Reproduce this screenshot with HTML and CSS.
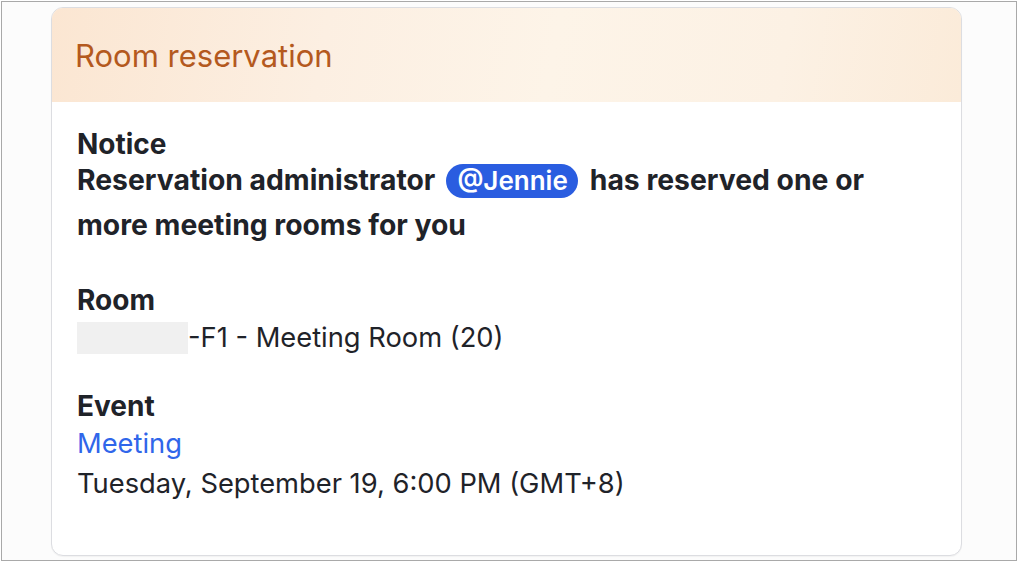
FILE: index.html
```html
<!DOCTYPE html>
<html>
<head>
<meta charset="utf-8">
<link rel="stylesheet" href="styles.css">
</head>
<body>
<div class="frame">
  <div class="card">
    <div class="card-header">
      <h1 class="title">Room reservation</h1>
    </div>
    <div class="card-body">
      <section class="block notice">
        <div class="label">Notice</div>
        <p class="notice-text"><span>Reservation administrator</span><span class="mention">@Jennie</span><span>has reserved one or</span><br><span>more meeting rooms for you</span></p>
      </section>
      <section class="block room">
        <div class="label">Room</div>
        <div class="value"><span class="redacted"></span>-F1 - Meeting Room (20)</div>
      </section>
      <section class="block event">
        <div class="label">Event</div>
        <div class="value link">Meeting</div>
        <div class="value date">Tuesday, September 19, 6:00 PM (GMT+8)</div>
      </section>
    </div>
  </div>
</div>
</body>
</html>
```

FILE: styles.css
```css
* { box-sizing: border-box; }
html, body { margin: 0; padding: 0; background: #ffffff; }
body {
  font-family: Inter, "Noto Sans", "Liberation Sans", sans-serif;
  color: #1f2329;
}
.frame {
  margin: 1px 0 0 1px;
  width: 1016px;
  height: 560px;
  border: 1px solid #a9a9a9;
  background: #fcfcfc;
  padding: 5px 0 0 49px;
}
.card {
  width: 911px;
  height: 549px;
  border: 1.5px solid #dcdde1;
  border-radius: 12px;
  background: #ffffff;
  overflow: hidden;
  box-shadow: 0 1px 1px rgba(0,0,0,0.04);
}
.card-header {
  height: 94px;
  padding: 0 23px;
  display: flex;
  align-items: center;
  background: linear-gradient(100deg, #fbe6d2 0%, #fcefe2 30%, #fdf4e8 55%, #fcf1e4 80%, #fbebd9 100%);
}
.title {
  margin: 0;
  font-size: 31px;
  font-weight: 400;
  color: #b4591e;
}
.card-body {
  padding: 23px 40px 0 25px;
  display: flex;
  flex-direction: column;
}
.block { display: flex; flex-direction: column; }
.room { margin-top: 33px; }
.event { margin-top: 30px; }
.label {
  font-size: 28px;
  font-weight: 700;
  line-height: 38px;
}
.notice-text {
  margin: -5px 0 0 0;
  font-size: 28.3px;
  font-weight: 700;
  line-height: 45px;
}
.mention {
  display: inline-block;
  background: #2a5de0;
  color: #ffffff;
  border-radius: 17px;
  padding: 0 10px 0 11px;
  font-size: 26px;
  font-weight: 600;
  line-height: 34px;
  margin: 0 12px 0 11px;
}
.value {
  font-size: 27.3px;
  font-weight: 400;
  line-height: 38px;
  display: flex;
  align-items: center;
}
.value.date { line-height: 42px; }
.link { color: #3066ea; }
.redacted {
  display: inline-block;
  width: 111px;
  height: 32px;
  background: #f0f0f0;
}
```
